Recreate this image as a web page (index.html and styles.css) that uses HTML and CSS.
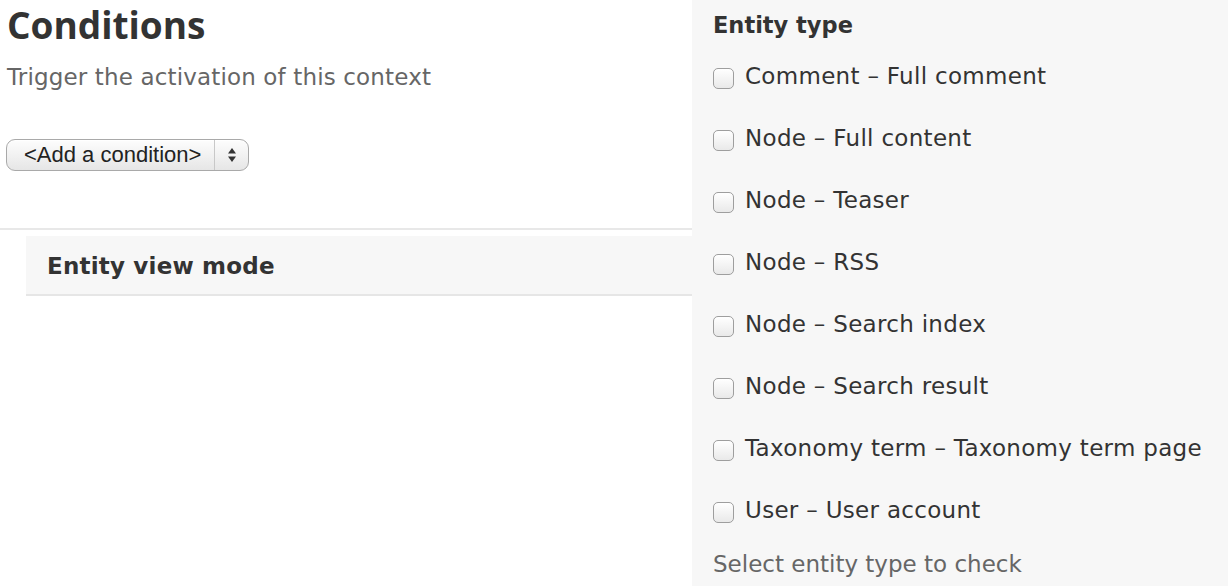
FILE: index.html
```html
<!DOCTYPE html>
<html>
<head>
<meta charset="utf-8">
<link rel="stylesheet" href="styles.css">
</head>
<body>
<div class="page">
  <div class="main">
    <h1 class="title">Conditions</h1>
    <p class="subtitle">Trigger the activation of this context</p>
    <div class="select">
      <span class="select-label">&lt;Add a condition&gt;</span>
      <span class="select-arrows">
        <svg width="10" height="18" viewBox="0 0 10 18"><path d="M5 2 L9 7.5 L1 7.5 Z" fill="#333"/><path d="M5 16 L9 10.5 L1 10.5 Z" fill="#333"/></svg>
      </span>
    </div>
    <div class="divider"></div>
    <div class="tab">Entity view mode</div>
  </div>
  <div class="side">
    <div class="side-title">Entity type</div>
    <ul class="options">
      <li><span class="cb"></span>Comment – Full comment</li>
      <li><span class="cb"></span>Node – Full content</li>
      <li><span class="cb"></span>Node – Teaser</li>
      <li><span class="cb"></span>Node – RSS</li>
      <li><span class="cb"></span>Node – Search index</li>
      <li><span class="cb"></span>Node – Search result</li>
      <li><span class="cb"></span>Taxonomy term – Taxonomy term page</li>
      <li><span class="cb"></span>User – User account</li>
    </ul>
    <div class="desc">Select entity type to check</div>
  </div>
</div>
</body>
</html>
```
FILE: styles.css
```css
html, body {
  margin: 0;
  padding: 0;
  background: #fff;
}
body {
  font-family: "DejaVu Sans", "Open Sans", sans-serif;
  color: #333;
  width: 1228px;
  height: 586px;
  overflow: hidden;
}
.page {
  display: flex;
  height: 586px;
}
.main {
  width: 692px;
  flex: none;
}
.title {
  margin: 0;
  padding: 0 0 0 7px;
  font-family: "Open Sans", "DejaVu Sans", sans-serif;
  font-weight: 700;
  font-size: 37px;
  line-height: 50px;
  color: #333;
}
.subtitle {
  margin: 14px 0 0 7px;
  font-size: 23px;
  line-height: 27px;
  letter-spacing: 0.15px;
  color: #666;
}
.select {
  margin: 48px 0 0 6px;
  width: 243px;
  height: 32px;
  box-sizing: border-box;
  border: 1px solid #a9a9a9;
  border-radius: 9px;
  background: linear-gradient(#fdfdfd, #e6e6e6);
  box-shadow: inset 0 1px 0 #fff;
  display: flex;
  align-items: center;
  font-family: "Liberation Sans", Arial, sans-serif;
  font-size: 22px;
  color: #222;
}
.select-label {
  width: 208px;
  box-sizing: border-box;
  padding-left: 17px;
  height: 100%;
  display: flex;
  align-items: center;
  border-right: 1px solid #c8c8c8;
}
.select-arrows {
  flex: 1;
  display: flex;
  justify-content: center;
  align-items: center;
}
.divider {
  margin-top: 57px;
  height: 2px;
  background: #e8e8e8;
}
.tab {
  margin: 6px 0 0 26px;
  height: 60px;
  box-sizing: border-box;
  padding: 2px 0 0 21px;
  background: #f7f7f7;
  border-bottom: 2px solid #e6e6e6;
  display: flex;
  align-items: center;
  font-weight: 700;
  font-size: 23px;
  letter-spacing: 0.2px;
  color: #333;
}
.side {
  flex: 1;
  background: #f7f7f7;
  padding: 10px 0 0 21px;
}
.side-title {
  font-weight: 700;
  font-size: 22.5px;
  line-height: 30px;
  color: #333;
}
.options {
  list-style: none;
  margin: 23px 0 0 0;
  padding: 0;
  display: flex;
  flex-direction: column;
  gap: 35px;
}
.options li {
  display: flex;
  align-items: center;
  font-size: 23px;
  line-height: 27px;
  letter-spacing: 0.3px;
  color: #333;
}
.cb {
  width: 21px;
  height: 21px;
  box-sizing: border-box;
  border: 1px solid #9e9e9e;
  border-radius: 5px;
  background: linear-gradient(#fff, #e9e9e9);
  margin-right: 11px;
  flex: none;
  position: relative;
  top: 2px;
}
.desc {
  margin-top: 27px;
  font-size: 23px;
  line-height: 26px;
  color: #666;
}
```
